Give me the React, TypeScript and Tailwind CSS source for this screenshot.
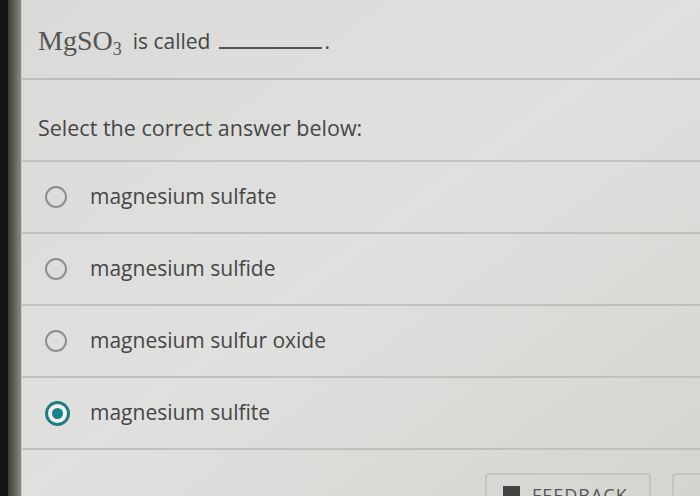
const options = [
  { label: 'magnesium sulfate', selected: false },
  { label: 'magnesium sulfide', selected: false },
  { label: 'magnesium sulfur oxide', selected: false },
  { label: 'magnesium sulfite', selected: true },
]

function Radio({ selected }: { selected: boolean }) {
  if (selected) {
    return (
      <span className="flex h-[25px] w-[25px] items-center justify-center rounded-full border-[3px] border-[#1f7c82] bg-[#f4f4f2]">
        <span className="h-[11px] w-[11px] rounded-full bg-[#17808a]" />
      </span>
    )
  }
  return <span className="h-[22px] w-[22px] rounded-full border-2 border-[#8e8e8c]" />
}

export default function App() {
  return (
    <div className="flex h-[496px] w-[700px] overflow-hidden bg-[#dcdcd9] font-['Open_Sans',sans-serif] text-[#464646]">
      {/* device bezel */}
      <div className="flex w-[22px] shrink-0">
        <div className="w-[8px] bg-[#141414]" />
        <div className="w-[13px] bg-gradient-to-r from-[#3e3a35] to-[#8d8a84]" />
        <div className="w-[1px] bg-[#c9c8c4]" />
      </div>

      <div className="flex min-w-0 flex-1 flex-col bg-gradient-to-br from-[#dadad8] via-[#e0e0de] to-[#d4d4d1]">
        <div className="flex h-[80px] shrink-0 items-center border-b-2 border-[#bdbdba] pl-[16px] pt-[4px]">
          <span className="font-['Liberation_Serif',serif] text-[28px] leading-none text-[#555]">
            MgSO<sub className="text-[18px]">3</sub>
          </span>
          <span className="ml-[11px] text-[21px] leading-none">is called</span>
          <span className="ml-[9px] mt-[14px] h-[2px] w-[103px] bg-[#555]" />
          <span className="ml-[2px] text-[21px] leading-none">.</span>
        </div>

        <div className="h-[82px] shrink-0 border-b-2 border-[#c2c2bf] pl-[16px] pt-[33px] text-[21.5px] leading-[29px]">
          Select the correct answer below:
        </div>

        {options.map((o) => (
          <div
            key={o.label}
            className="flex h-[72px] shrink-0 items-center border-b-2 border-[#c0c0bd] pl-[23px] text-[21px]"
          >
            <span className="flex w-[45px] items-center">
              <Radio selected={o.selected} />
            </span>
            <span>{o.label}</span>
          </div>
        ))}

        <div className="flex flex-1 gap-[21px] pl-[463px] pt-[23px]">
          <div className="flex h-[40px] w-[166px] shrink-0 items-start gap-[12px] rounded-[4px] border-2 border-[#c4c4c1] pl-[16px] pt-[11px]">
            <span className="h-[16px] w-[17px] bg-[#444]" />
            <span className="text-[18px] leading-none tracking-[1px] text-[#555]">FEEDBACK</span>
          </div>
          <div className="h-[40px] w-[80px] shrink-0 rounded-[4px] border-2 border-[#c4c4c1]" />
        </div>
      </div>
    </div>
  )
}
